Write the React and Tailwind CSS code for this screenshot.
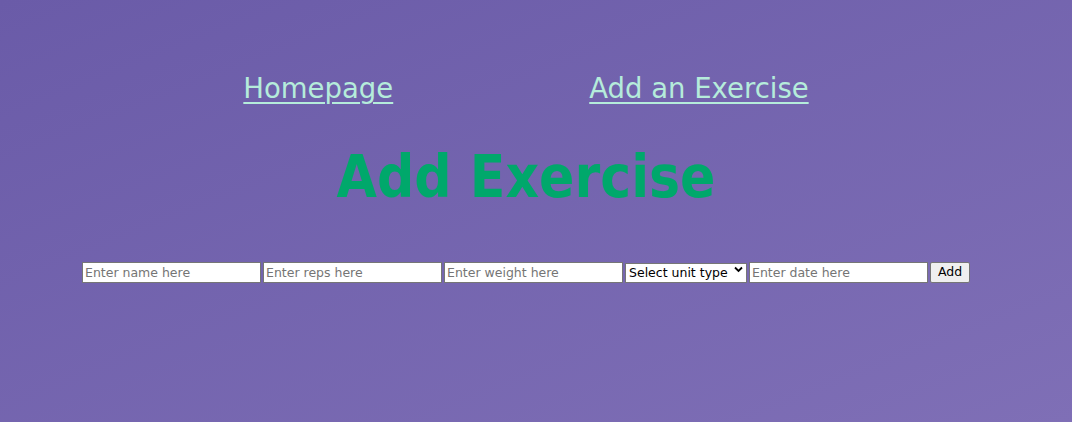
import React, { useState } from 'react';

const fieldClass =
    "h-[21px] w-[179px] border border-[#767676] bg-white px-[2px] text-[12.5px] text-black placeholder:text-[#757575] outline-none";

const App = () => {
    const [form, setForm] = useState({ name: '', reps: '', weight: '', unit: '', date: '' });

    const update = (key) => (e) => setForm({ ...form, [key]: e.target.value });

    return (
        <div
            className="min-h-screen w-full bg-gradient-to-br from-[#6a5ba8] to-[#7f6fb6] text-white"
            style={{ fontFamily: '"DejaVu Sans", "Liberation Sans", sans-serif' }}
        >
            <div className="w-[1052px]">
                {/* Nav links */}
                <nav className="flex justify-center gap-[196px] pt-[72px]">
                    <a href="#" className="text-[27.5px] leading-[32px] text-[#b5ecdb] underline underline-offset-[4px] decoration-[2px]">
                        Homepage
                    </a>
                    <a href="#" className="text-[27.5px] leading-[32px] text-[#b5ecdb] underline underline-offset-[4px] decoration-[2px]">
                        Add an Exercise
                    </a>
                </nav>

                <h1
                    className="mt-[39px] text-center text-[58px] font-bold leading-[68px] text-[#00a86b]"
                    style={{ fontFamily: '"DejaVu Sans Condensed", "DejaVu Sans", sans-serif' }}
                >
                    Add Exercise
                </h1>

                {/* Form row */}
                <form className="mt-[49px] flex items-center justify-center gap-[2px]" onSubmit={(e) => e.preventDefault()}>
                    <input className={fieldClass} placeholder="Enter name here" value={form.name} onChange={update('name')} />
                    <input className={fieldClass} placeholder="Enter reps here" value={form.reps} onChange={update('reps')} />
                    <input className={fieldClass} placeholder="Enter weight here" value={form.weight} onChange={update('weight')} />
                    <div className="relative">
                        <select
                            value={form.unit}
                            onChange={update('unit')}
                            className="h-[20px] w-[122px] appearance-none border border-[#767676] bg-white pl-[3px] text-[12.5px] leading-[18px] text-black outline-none"
                        >
                            <option value="">Select unit type</option>
                            <option value="kgs">kgs</option>
                            <option value="lbs">lbs</option>
                        </select>
                        <svg
                            className="pointer-events-none absolute right-[4px] top-[6px]"
                            width="9"
                            height="7"
                            viewBox="0 0 9 7"
                        >
                            <path d="M1 1.5 L4.5 5 L8 1.5" fill="none" stroke="#000" strokeWidth="1.8" />
                        </svg>
                    </div>
                    <input className={fieldClass} placeholder="Enter date here" value={form.date} onChange={update('date')} />
                    <button
                        type="submit"
                        className="h-[21px] w-[40px] rounded-[2px] border border-[#767676] bg-[#efefef] text-[12.5px] text-black"
                    >
                        Add
                    </button>
                </form>
            </div>
        </div>
    );
};

export default App;
